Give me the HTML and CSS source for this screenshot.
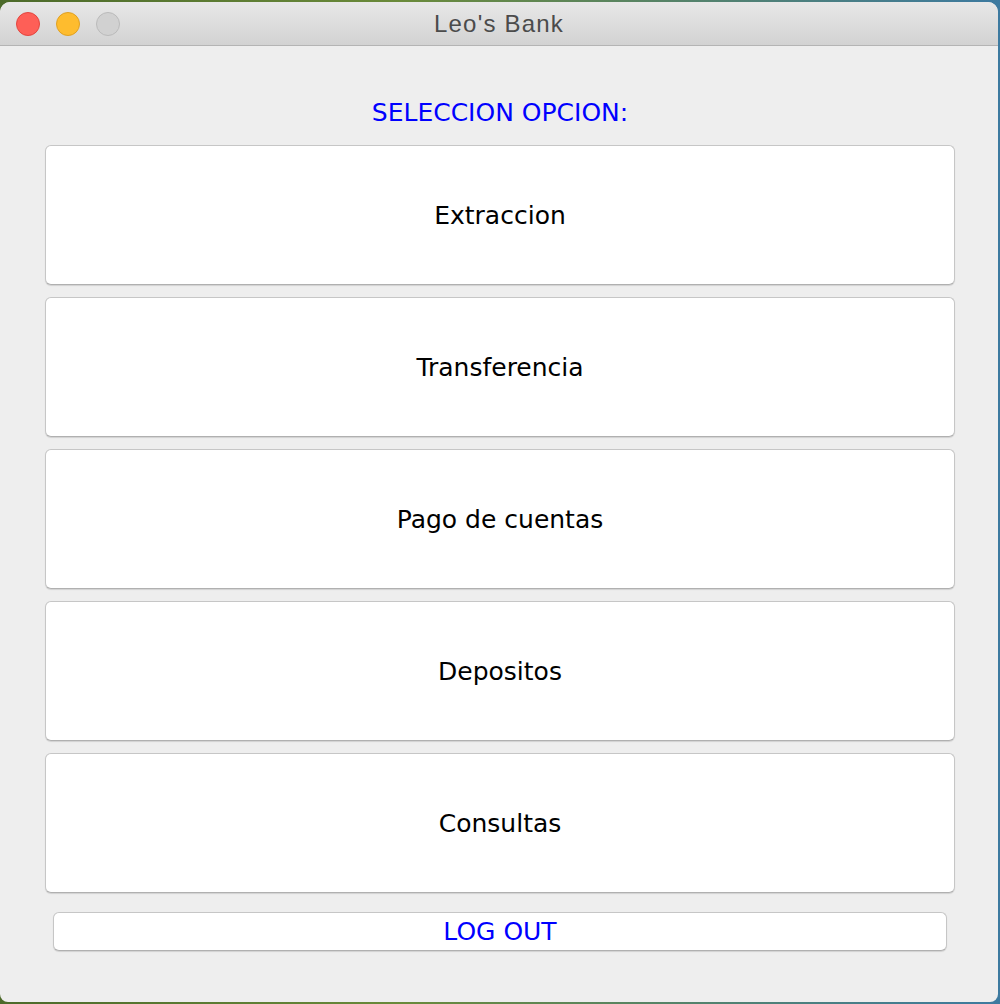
FILE: index.html
```html
<!DOCTYPE html>
<html>
<head>
<meta charset="utf-8">
<title>Leo's Bank</title>
<link rel="stylesheet" href="styles.css">
</head>
<body>
<div class="desktop">
  <div class="window">
    <div class="titlebar">
      <div class="lights">
        <span class="light red"></span>
        <span class="light yellow"></span>
        <span class="light gray"></span>
      </div>
      <div class="title">Leo's Bank</div>
    </div>
    <div class="content">
      <div class="heading">SELECCION OPCION:</div>
      <div class="options">
        <button class="option">Extraccion</button>
        <button class="option">Transferencia</button>
        <button class="option">Pago de cuentas</button>
        <button class="option">Depositos</button>
        <button class="option">Consultas</button>
      </div>
      <button class="logout">LOG OUT</button>
    </div>
  </div>
</div>
</body>
</html>
```

FILE: styles.css
```css
html, body {
  margin: 0;
  padding: 0;
}
body {
  width: 1000px;
  height: 1004px;
  overflow: hidden;
  background: linear-gradient(90deg, #4c6a2a 0%, #6a8a3a 40%, #3d7aa0 100%);
}
.desktop {
  padding-top: 2px;
}
.window {
  width: 998px;
  height: 1000px;
  background: #eeeeee;
  border-radius: 10px 10px 8px 8px;
  overflow: hidden;
  display: flex;
  flex-direction: column;
}
.titlebar {
  position: relative;
  height: 43px;
  background: linear-gradient(#e8e8e8, #d2d2d2);
  border-bottom: 1px solid #b4b4b4;
  display: flex;
  align-items: center;
  justify-content: center;
  flex-shrink: 0;
}
.lights {
  position: absolute;
  left: 16px;
  top: 10px;
  display: flex;
  gap: 16px;
}
.light {
  width: 24px;
  height: 24px;
  border-radius: 50%;
  box-sizing: border-box;
  border: 1px solid;
}
.red { background: #fe5f57; border-color: #e2463f; }
.yellow { background: #febc2e; border-color: #dfa023; }
.gray { background: #d1d1d1; border-color: #bababa; }
.title {
  font-family: "Liberation Sans", Arial, sans-serif;
  font-size: 24px;
  letter-spacing: 1.2px;
  color: #4b4b4b;
  padding-top: 1px;
}
.content {
  display: flex;
  flex-direction: column;
  padding: 0 43px 0 45px;
}
.heading {
  font-family: "DejaVu Sans", Verdana, sans-serif;
  font-size: 25px;
  color: #0000ff;
  text-align: center;
  height: 99px;
  line-height: 28px;
  padding-top: 53px;
  box-sizing: border-box;
}
.options {
  display: flex;
  flex-direction: column;
  gap: 12px;
}
.option {
  height: 140px;
  background: #ffffff;
  border: 1px solid #c6c6c6;
  border-bottom-color: #b0b0b0;
  border-radius: 6px;
  box-shadow: 0 1px 1px rgba(0,0,0,0.12);
  font-family: "DejaVu Sans", Verdana, sans-serif;
  font-size: 25px;
  color: #000000;
  padding: 0;
  margin: 0;
}
.logout {
  margin: 19px 8px 0 8px;
  height: 39px;
  background: #ffffff;
  border: 1px solid #c6c6c6;
  border-bottom-color: #b0b0b0;
  border-radius: 6px;
  box-shadow: 0 1px 1px rgba(0,0,0,0.12);
  font-family: "DejaVu Sans", Verdana, sans-serif;
  font-size: 25px;
  color: #0000ff;
  padding: 0;
}
```
